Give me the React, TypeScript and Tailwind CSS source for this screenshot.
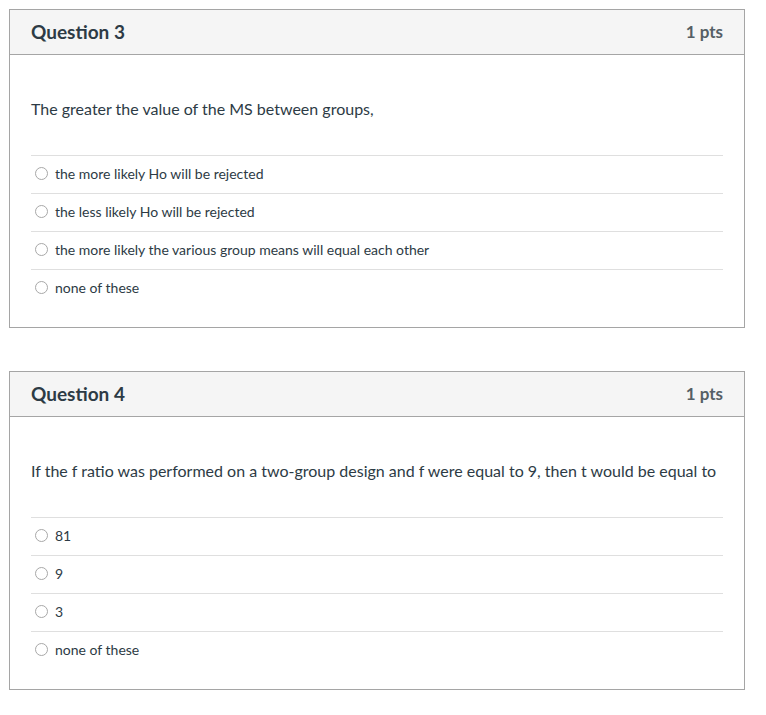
import React from 'react'

interface Question {
  id: number
  points: string
  text: string
  answers: string[]
}

const questions: Question[] = [
  {
    id: 3,
    points: '1 pts',
    text: 'The greater the value of the MS between groups,',
    answers: [
      'the more likely Ho will be rejected',
      'the less likely Ho will be rejected',
      'the more likely the various group means will equal each other',
      'none of these',
    ],
  },
  {
    id: 4,
    points: '1 pts',
    text: 'If the f ratio was performed on a two-group design and f were equal to 9, then t would be equal to',
    answers: ['81', '9', '3', 'none of these'],
  },
]

function QuestionCard({ q }: { q: Question }) {
  return (
    <div className="w-[736px] border border-[#a5a5a5] bg-white">
      {/* Header */}
      <div className="flex h-[45px] items-center justify-between border-b border-[#a5a5a5] bg-[#f5f5f5] pl-[21px] pr-[21px]">
        <h2 className="text-[19px] font-bold text-[#2d3b45]">Question {q.id}</h2>
        <span className="text-[17px] font-bold text-[#555f66]">{q.points}</span>
      </div>

      {/* Body */}
      <div className="px-[21px] pt-[42px] pb-[20px]">
        <p className="text-[16px] leading-[24px] text-[#2d3b45]">{q.text}</p>
        <div className="mt-[34px]">
          {q.answers.map((a) => (
            <label
              key={a}
              className="flex h-[38px] items-center border-t border-[#dfdfdf] pb-[2px] pl-[4px] text-[14px] text-[#2d3b45]"
            >
              <span className="mr-[7px] h-[13px] w-[13px] shrink-0 rounded-full border border-[#a8a8a8] bg-white" />
              {a}
            </label>
          ))}
        </div>
      </div>
    </div>
  )
}

export default function App() {
  return (
    <div
      className="min-h-[715px] bg-white pl-[9px] pt-[9px]"
      style={{ fontFamily: 'Lato, "Open Sans", sans-serif' }}
    >
      <div className="flex flex-col gap-[43px]">
        {questions.map((q) => (
          <QuestionCard key={q.id} q={q} />
        ))}
      </div>
    </div>
  )
}
